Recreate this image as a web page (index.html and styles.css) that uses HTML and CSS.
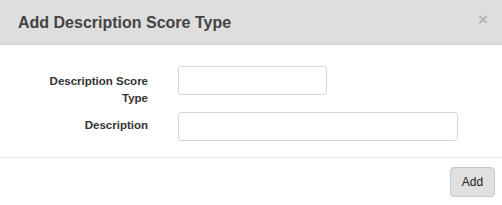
FILE: index.html
```html
<!DOCTYPE html>
<html lang="en">
<head>
    <meta charset="UTF-8">
    <title>Add Description Score Type</title>
    <link rel="stylesheet" href="styles.css">
</head>
<body>
<div class="modal">
    <div class="modal-header">
        <h4 class="modal-title">Add Description Score Type</h4>
        <span class="close">&times;</span>
    </div>
    <div class="modal-body">
        <div class="form-row">
            <label class="control-label">Description Score Type</label>
            <input type="text" class="input-short">
        </div>
        <div class="form-row">
            <label class="control-label">Description</label>
            <input type="text" class="input-long">
        </div>
    </div>
    <div class="modal-footer">
        <button class="btn">Add</button>
    </div>
</div>
</body>
</html>
```

FILE: styles.css
```css
body {
    margin: 0;
    background-color: #fff;
    font-family: "Liberation Sans", Arial, sans-serif;
    color: #333;
}

.modal {
    width: 502px;
    height: 205px;
    overflow: hidden;
}

.modal-header {
    height: 44px;
    background-color: #dedede;
    border-bottom: 1px solid #cfcfcf;
    display: flex;
    align-items: center;
    justify-content: space-between;
    padding: 0 14px 0 18px;
}

.modal-title {
    margin: 0;
    font-size: 16px;
    font-weight: bold;
    color: #444;
    padding-top: 1px;
}

.close {
    font-size: 17px;
    font-weight: bold;
    color: #b4b4b4;
    margin-top: -4px;
}

.modal-body {
    height: 113px;
    padding-top: 21px;
    box-sizing: border-box;
    border-bottom: 1px solid #eaeaea;
}

.form-row {
    display: flex;
    align-items: flex-start;
}

.form-row:first-child {
    height: 41px;
}

.form-row + .form-row {
    margin-top: 5px;
}

.control-label {
    width: 110px;
    margin-left: 38px;
    margin-right: 30px;
    text-align: right;
    font-size: 11.5px;
    font-weight: bold;
    line-height: 17px;
    color: #333;
    padding-top: 7px;
}

.form-row + .form-row .control-label {
    padding-top: 5px;
}

input {
    height: 29px;
    box-sizing: border-box;
    border: 1px solid #d6d6d6;
    border-radius: 3px;
    background: #fff;
    padding: 0 6px;
    margin: 0;
}

.input-short {
    width: 149px;
}

.input-long {
    width: 280px;
}

.modal-footer {
    display: flex;
    justify-content: flex-end;
    padding: 9px 7px 0 0;
}

.btn {
    width: 45px;
    height: 30px;
    font-family: "Liberation Sans", Arial, sans-serif;
    font-size: 12px;
    color: #222;
    background-color: #e0e0e0;
    border: 1px solid #c8c8c8;
    border-radius: 4px;
    padding: 0;
}
```
